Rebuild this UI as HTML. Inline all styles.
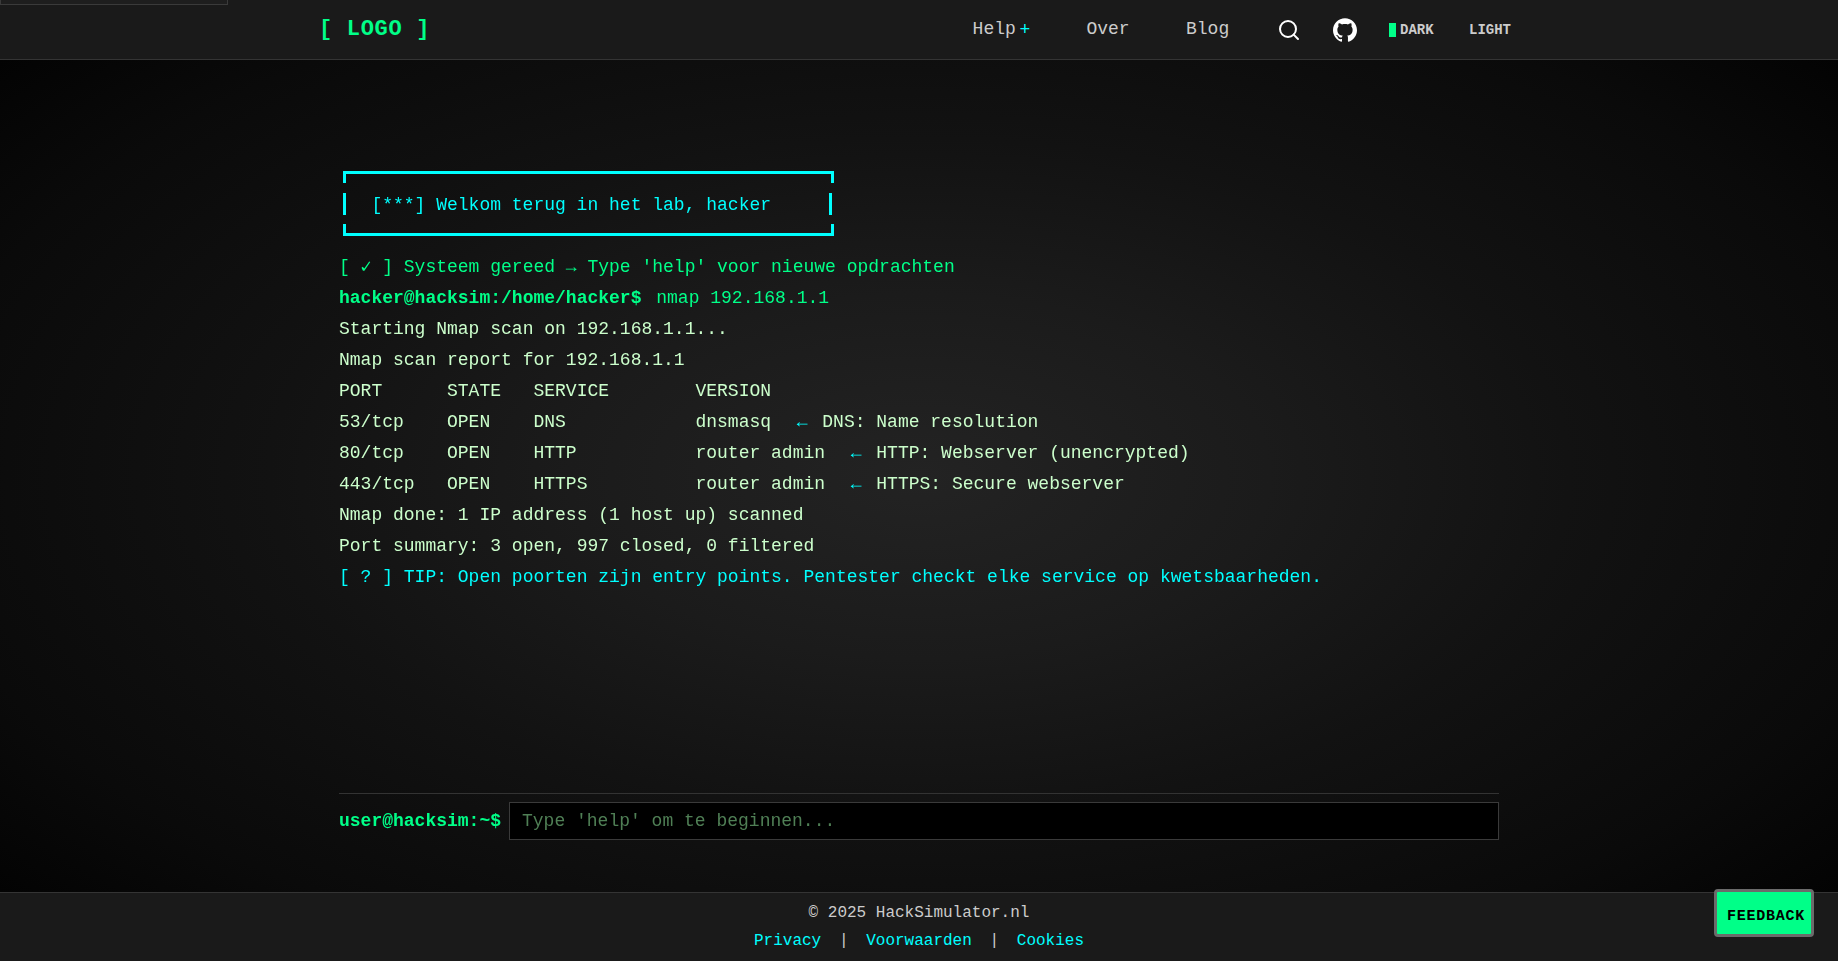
<!DOCTYPE html>
<html lang="nl">
<head>
<meta charset="utf-8">
<title>HackSimulator.nl</title>
<style>
*{box-sizing:border-box;margin:0;padding:0}
html,body{width:1838px;height:961px;overflow:hidden;background:#050505}
body{font-family:"Liberation Mono",monospace;color:#ccffcc;position:relative}
#bg{position:absolute;left:0;top:60px;width:1838px;height:832px;
 background:radial-gradient(ellipse 1000px 520px at 919px 416px,#232323 0%,#1b1b1b 35%,#121212 65%,#0a0a0a 100%,#020202 125%);}
#skip{position:absolute;left:0px;top:-20px;width:228px;height:25px;border:1px solid #3a3a3a;background:#1e1e1e;z-index:5}
header{position:absolute;left:0;top:0;width:1838px;height:60px;background:#1a1a1a;border-bottom:1px solid #343434}
#logo{position:absolute;left:319px;top:17px;letter-spacing:0.7px;font-size:22px;font-weight:bold;color:#00ff88;line-height:26px;white-space:pre}
.nav{position:absolute;top:18px;font-size:18px;line-height:22px;color:#cccccc;white-space:pre}
.nav .plus{color:#00ffff}
.tg{position:absolute;top:22px;font-size:14px;font-weight:bold;line-height:16px;color:#cccccc;white-space:pre}
#blk{position:absolute;left:1388.6px;top:23px;width:7.6px;height:13.7px;background:#00ff88}
#term{position:absolute;left:339px;top:252px;font-size:18px;line-height:31px;white-space:pre}
.g{color:#00ff88}.c{color:#00ffff}.a{color:#00ffff;margin:0 4px}
.b{font-weight:bold}
#box div{position:absolute;background:#00ffff}
#boxtxt{position:absolute;left:371.4px;top:190px;font-size:18px;line-height:31px;color:#00ffff;white-space:pre}
#sep{position:absolute;left:339px;top:793px;width:1160px;height:1px;background:#333}
#prompt{position:absolute;left:339px;top:806px;font-size:18px;line-height:31px;font-weight:bold;color:#00ff88;white-space:pre}
#inp{position:absolute;left:509px;top:802px;width:990px;height:38px;background:#000;border:1px solid #3a3a3a;font-size:18px;line-height:36px;padding-left:12px;color:#4f7f55;white-space:pre}
footer{position:absolute;left:0;top:892px;width:1838px;height:69px;background:#1a1a1a;border-top:1px solid #343434}
footer .l1{position:absolute;left:0;width:1838px;top:10px;text-align:center;font-size:16px;line-height:20px;color:#cccccc;white-space:pre}
footer .l2{position:absolute;left:0;width:1838px;top:38px;text-align:center;font-size:16px;line-height:20px;color:#cccccc;white-space:pre}
footer .l2 span{color:#00ffff}footer .l2 i{font-style:normal;display:inline-block;width:45px;text-align:center}
#fb{position:absolute;left:1714px;top:889px;width:100px;height:48px;background:#00ff88;border:3px solid #6b6b6b;border-radius:4px;font-size:15px;letter-spacing:0.75px;font-weight:bold;color:#000;text-align:center;line-height:50px;padding-left:4.2px}
svg{position:absolute}
</style>
</head>
<body>
<div id="bg"></div>
<header>
<div id="logo">[ LOGO ]</div>
<div class="nav" style="left:972.6px">Help<span class="plus" style="margin-left:3.6px;position:relative;top:1px">+</span></div>
<div class="nav" style="left:1086.4px">Over</div>
<div class="nav" style="left:1186px">Blog</div>
<svg style="left:1277px;top:18px" width="24" height="24" viewBox="0 0 24 24" fill="none" stroke="#fff" stroke-width="2" stroke-linecap="round"><circle cx="11" cy="11" r="8"/><path d="M21 21l-4.35-4.35"/></svg>
<svg style="left:1333px;top:18px" width="24" height="24" viewBox="0 0 24 24" fill="#fff"><path d="M12 .297c-6.63 0-12 5.373-12 12 0 5.303 3.438 9.800 8.205 11.385.6.113.82-.258.82-.577 0-.285-.01-1.040-.015-2.040-3.338.724-4.042-1.610-4.042-1.610C4.422 18.070 3.633 17.700 3.633 17.700c-1.087-.744.084-.729.084-.729 1.205.084 1.838 1.236 1.838 1.236 1.070 1.835 2.809 1.305 3.495.998.108-.776.417-1.305.76-1.605-2.665-.3-5.466-1.332-5.466-5.930 0-1.310.465-2.380 1.235-3.220-.135-.303-.54-1.523.105-3.176 0 0 1.005-.322 3.300 1.230.960-.267 1.980-.399 3-.405 1.020.006 2.040.138 3 .405 2.280-1.552 3.285-1.230 3.285-1.230.645 1.653.240 2.873.120 3.176.765.840 1.230 1.910 1.230 3.220 0 4.610-2.805 5.625-5.475 5.920.420.360.810 1.096.810 2.220 0 1.606-.015 2.896-.015 3.286 0 .315.210.690.825.570C20.565 22.092 24 17.592 24 12.297c0-6.627-5.373-12-12-12"/></svg>
<div id="blk"></div>
<div class="tg" style="left:1400px">DARK</div>
<div class="tg" style="left:1469px">LIGHT</div>
</header>
<div id="skip"></div>

<div id="main" style="position:absolute;left:0;top:0;width:1838px;height:961px;will-change:transform">
<div id="box">
<div style="left:343px;top:171px;width:491px;height:3px"></div>
<div style="left:343px;top:233px;width:491px;height:3px"></div>
<div style="left:343px;top:171px;width:3px;height:12px"></div>
<div style="left:831px;top:171px;width:3px;height:12px"></div>
<div style="left:343px;top:224px;width:3px;height:12px"></div>
<div style="left:831px;top:224px;width:3px;height:12px"></div>
<div style="left:343px;top:193px;width:3px;height:22px"></div>
<div style="left:829px;top:193px;width:3px;height:22px"></div>
</div>
<div id="boxtxt">[***] Welkom terug in het lab, hacker</div>

<div id="term"><span class="g">[   ] Systeem gereed → Type 'help' voor nieuwe opdrachten</span>
<span class="g b" style="margin-right:4px">hacker@hacksim:/home/hacker$</span><span class="g"> nmap 192.168.1.1</span>
Starting Nmap scan on 192.168.1.1...
Nmap scan report for 192.168.1.1
PORT      STATE   SERVICE        VERSION
53/tcp    OPEN    DNS            dnsmasq  <span class="a">←</span> DNS: Name resolution
80/tcp    OPEN    HTTP           router admin  <span class="a">←</span> HTTP: Webserver (unencrypted)
443/tcp   OPEN    HTTPS          router admin  <span class="a">←</span> HTTPS: Secure webserver
Nmap done: 1 IP address (1 host up) scanned
Port summary: 3 open, 997 closed, 0 filtered
<span class="c">[ ? ] TIP: Open poorten zijn entry points. Pentester checkt elke service op kwetsbaarheden.</span></div>

<svg style="left:360px;top:260px" width="12" height="12" viewBox="0 0 12 12"><path d="M1.53 7.75L2.64 6.64L4.27 8.6L9.16 1.42L10.27 1.95L4.4 10.76L2.96 10.76Z" fill="#00ff88"/></svg>
<div id="sep"></div>
<div id="prompt">user@hacksim:~$</div>
<div id="inp">Type 'help' om te beginnen...</div>
</div>

<footer>
<div class="l1">© 2025 HackSimulator.nl</div>
<div class="l2"><span>Privacy</span><i>|</i><span>Voorwaarden</span><i>|</i><span>Cookies</span></div>
</footer>
<div id="fb">FEEDBACK</div>
</body>
</html>
